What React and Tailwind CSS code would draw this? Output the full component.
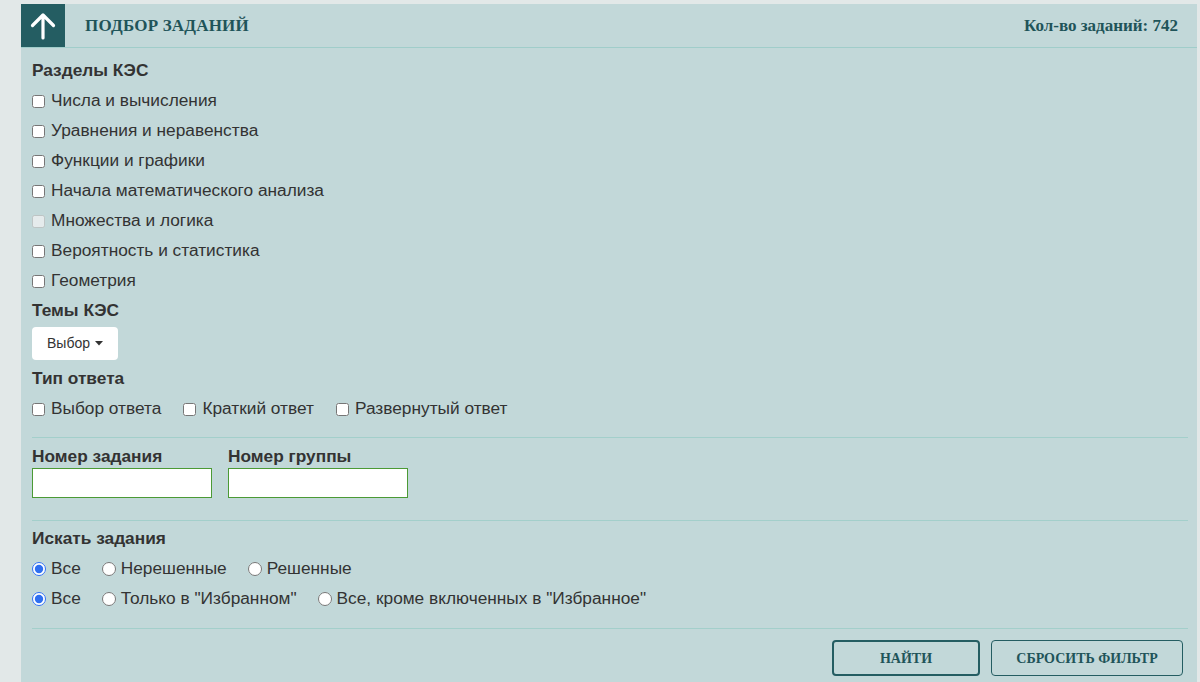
import React from "react";

const sans = { fontFamily: '"Liberation Sans", Arial, sans-serif' };
const serif = { fontFamily: '"Liberation Serif", "Times New Roman", serif' };

function Check({ label, disabled }) {
  return (
    <label className="flex items-center h-[30px] text-[17.3px] text-[#333]">
      <input
        type="checkbox"
        disabled={disabled}
        className="w-[13px] h-[13px] m-0 mr-[6px] accent-[#1a73e8]"
      />
      <span>{label}</span>
    </label>
  );
}

function Radio({ label, name, checked }) {
  return (
    <label className="flex items-center h-[30px] text-[17.3px] text-[#333]">
      <input
        type="radio"
        name={name}
        defaultChecked={checked}
        className="w-[14px] h-[14px] m-0 mr-[5px] accent-[#2f6ff0]"
      />
      <span>{label}</span>
    </label>
  );
}

export default function App() {
  return (
    <div className="w-[1200px] h-[682px] bg-[#e2e8e8] pl-[21px] pt-[4px] pr-[3px] overflow-hidden" style={sans}>
      <div className="bg-[#c2d8d9] h-full flex flex-col">
        {/* header */}
        <div className="flex items-center h-[44px] border-b border-[#a0cdca]">
          <div className="w-[44px] h-[43px] bg-[#245d62] flex items-center justify-center self-start">
            <svg width="30" height="30" viewBox="0 0 30 30" fill="none">
              <path d="M15 27 V4 M4.5 14.5 L15 4 L25.5 14.5" stroke="white" strokeWidth="3.2" strokeLinecap="round" strokeLinejoin="round" />
            </svg>
          </div>
          <div className="ml-[20px] text-[17px] font-bold text-[#1f5459] tracking-[0.2px]" style={serif}>
            ПОДБОР ЗАДАНИЙ
          </div>
          <div className="ml-auto mr-[19px] text-[17px] font-bold text-[#1f5459]" style={serif}>
            Кол-во заданий: 742
          </div>
        </div>

        <div className="pl-[11px] pr-[9px] pt-[8px] flex flex-col">
          <div className="h-[30px] flex items-center font-bold text-[17.3px] text-[#333]">Разделы КЭС</div>
          <Check label="Числа и вычисления" />
          <Check label="Уравнения и неравенства" />
          <Check label="Функции и графики" />
          <Check label="Начала математического анализа" />
          <Check label="Множества и логика" disabled />
          <Check label="Вероятность и статистика" />
          <Check label="Геометрия" />

          <div className="h-[30px] flex items-center font-bold text-[17.3px] text-[#333]">Темы КЭС</div>
          <div className="mt-[1px]">
            <button className="w-[86px] h-[33px] bg-white rounded-[4px] text-[14px] text-[#333] flex items-center justify-center gap-[5px]">
              <span>Выбор</span>
              <svg width="8" height="5" viewBox="0 0 8 5"><path d="M0 0 H8 L4 4.5 Z" fill="#333" /></svg>
            </button>
          </div>

          <div className="mt-[4px] h-[30px] flex items-center font-bold text-[17.3px] text-[#333]">Тип ответа</div>
          <div className="flex gap-[22px]">
            <Check label="Выбор ответа" />
            <Check label="Краткий ответ" />
            <Check label="Развернутый ответ" />
          </div>

          <div className="mt-[13px] h-px bg-[#a3cfcb]" />

          <div className="mt-[8px] flex gap-[16px]">
            <div className="flex flex-col">
              <div className="h-[20px] leading-[20px] font-bold text-[17.3px] text-[#333]">Номер задания</div>
              <input className="mt-[2px] w-[180px] h-[30px] bg-white border border-[#4b9a35] outline-none" />
            </div>
            <div className="flex flex-col">
              <div className="h-[20px] leading-[20px] font-bold text-[17.3px] text-[#333]">Номер группы</div>
              <input className="mt-[2px] w-[180px] h-[30px] bg-white border border-[#4b9a35] outline-none" />
            </div>
          </div>

          <div className="mt-[22px] h-px bg-[#a3cfcb]" />

          <div className="mt-[3px] h-[30px] flex items-center font-bold text-[17.3px] text-[#333]">Искать задания</div>
          <div className="flex gap-[21px]">
            <Radio name="a" label="Все" checked />
            <Radio name="a" label="Нерешенные" />
            <Radio name="a" label="Решенные" />
          </div>
          <div className="flex gap-[21px]">
            <Radio name="b" label="Все" checked />
            <Radio name="b" label="Только в &quot;Избранном&quot;" />
            <Radio name="b" label="Все, кроме включенных в &quot;Избранное&quot;" />
          </div>

          <div className="mt-[14px] h-px bg-[#a3cfcb]" />

          <div className="mt-[11px] flex justify-end gap-[11px] pr-[5px]">
            <button
              className="w-[148px] h-[36px] border-2 border-[#245d62] rounded-[4px] text-[14px] font-bold text-[#1f5459]"
              style={serif}
            >
              НАЙТИ
            </button>
            <button
              className="w-[192px] h-[36px] border border-[#245d62] rounded-[4px] text-[14px] font-bold text-[#1f5459]"
              style={serif}
            >
              СБРОСИТЬ ФИЛЬТР
            </button>
          </div>
        </div>
      </div>
    </div>
  );
}
